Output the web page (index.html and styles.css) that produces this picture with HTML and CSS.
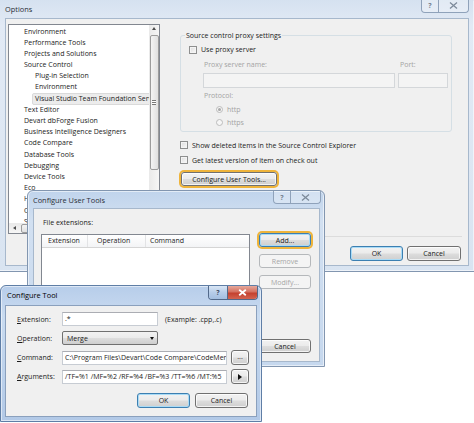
FILE: index.html
```html
<!DOCTYPE html>
<html lang="en">
<head>
  <meta charset="UTF-8">
  <title>Options</title>
  <link rel="stylesheet" href="styles.css">
</head>
<body>

  <!-- Options dialog (back) -->
  <div class="win win-options">
    <div class="titlebar">
      <span class="title">Options</span>
      <div class="caps">
        <span class="cap cap-help">?</span>
        <span class="cap cap-close"><svg width="9" height="7" viewBox="0 0 9 7"><path d="M1 0.5 L8 6.5 M8 0.5 L1 6.5" stroke="#7d8b9b" stroke-width="1.3" fill="none"/></svg></span>
      </div>
    </div>
    <div class="client options-body">
      <div class="tree">
        <ul class="tree-items">
          <li>Environment</li>
          <li>Performance Tools</li>
          <li>Projects and Solutions</li>
          <li>Source Control</li>
          <li class="sub">Plug-in Selection</li>
          <li class="sub">Environment</li>
          <li class="sub"><span class="sel">Visual Studio Team Foundation Server</span></li>
          <li>Text Editor</li>
          <li>Devart dbForge Fusion</li>
          <li>Business Intelligence Designers</li>
          <li>Code Compare</li>
          <li>Database Tools</li>
          <li>Debugging</li>
          <li>Device Tools</li>
          <li>Eco</li>
          <li>HTML Designer</li>
          <li>Office Tools</li>
          <li>SQL Server Tools</li>
        </ul>
        <div class="vscroll">
          <span class="arr arr-up"></span>
          <span class="vthumb"><span class="grip"></span></span>
        </div>
        <div class="hscroll">
          <span class="arr arr-left"></span>
          <span class="hthumb"></span>
        </div>
        <div class="corner"></div>
      </div>

      <div class="settings">
        <fieldset class="group">
          <legend>Source control proxy settings</legend>
          <div class="check in-group"><span class="box"></span>Use proxy server</div>
          <div class="proxy">
            <span class="dim">Proxy server name:</span>
            <span class="dim port-label">Port:</span>
            <span class="field off"></span>
            <span class="field off"></span>
          </div>
          <div class="dim protocol">Protocol:</div>
          <div class="radio"><span class="dot on"></span><span class="dim">http</span></div>
          <div class="radio"><span class="dot"></span><span class="dim">https</span></div>
        </fieldset>
        <div class="check first"><span class="box"></span>Show deleted items in the Source Control Explorer</div>
        <div class="check"><span class="box"></span>Get latest version of item on check out</div>
        <span class="btn focus tools-btn">Configure User Tools...</span>
      </div>

      <div class="footer">
        <span class="btn default w53">OK</span>
        <span class="btn w54">Cancel</span>
      </div>
    </div>
  </div>

  <!-- Configure User Tools dialog (middle) -->
  <div class="win win-tools">
    <div class="titlebar">
      <span class="title">Configure User Tools</span>
      <div class="caps">
        <span class="cap cap-help">?</span>
        <span class="cap cap-close"><svg width="9" height="7" viewBox="0 0 9 7"><path d="M1 0.5 L8 6.5 M8 0.5 L1 6.5" stroke="#7d8b9b" stroke-width="1.3" fill="none"/></svg></span>
      </div>
    </div>
    <div class="client tools-body">
      <div class="lbl-ext">File extensions:</div>
      <div class="list">
        <div class="list-head">
          <span class="c1">Extension</span>
          <span class="c2">Operation</span>
          <span class="c3">Command</span>
        </div>
      </div>
      <div class="side-btns">
        <span class="btn default focus">Add...</span>
        <span class="btn off">Remove</span>
        <span class="btn off">Modify...</span>
        <span class="btn push-down">Cancel</span>
      </div>
    </div>
  </div>

  <!-- Configure Tool dialog (front, active) -->
  <div class="win win-tool active">
    <div class="titlebar">
      <span class="title">Configure Tool</span>
      <div class="caps">
        <span class="cap cap-help">?</span>
        <span class="cap cap-close"><svg width="9" height="7" viewBox="0 0 9 7"><path d="M1.2 0.8 L7.8 6.2 M7.8 0.8 L1.2 6.2" stroke="#fff" stroke-width="1.8" fill="none"/></svg></span>
      </div>
    </div>
    <div class="client tool-body">
      <span class="lbl"><u>E</u>xtension:</span>
      <div class="ext-row">
        <span class="field short">.*</span>
        <span class="hint">(Example: .cpp,.c)</span>
      </div>

      <span class="lbl"><u>O</u>peration:</span>
      <div class="ext-row">
        <span class="combo">Merge<span class="combo-arrow"></span></span>
      </div>

      <span class="lbl"><u>C</u>ommand:</span>
      <span class="field">C:\Program Files\Devart\Code Compare\CodeMerge.exe</span>
      <span class="btn small">...</span>

      <span class="lbl"><u>A</u>rguments:</span>
      <span class="field">/TF=%1 /MF=%2 /RF=%4 /BF=%3 /TT=%6 /MT:%5</span>
      <span class="btn small"><span class="play"></span></span>

      <div class="tool-foot">
        <span class="btn default w53">OK</span>
        <span class="btn w53">Cancel</span>
      </div>
    </div>
  </div>

</body>
</html>
```

FILE: styles.css
```css
* {
  box-sizing: border-box;
}

body {
  margin: 0;
  width: 474px;
  height: 423px;
  overflow: hidden;
  position: relative;
  background-color: white;
  font-family: "Open Sans", "Noto Sans", sans-serif;
  font-size: 7px;
  color: #1b1b1b;
}

/* ---------- window frames ---------- */

.win {
  position: absolute;
  display: flex;
  flex-direction: column;
  border: 1px solid #8296b0;
  border-radius: 6px 6px 0 0;
  box-shadow: inset 0 0 0 1px rgba(255,255,255,0.55);
  background: linear-gradient(#d3e0ef, #e2eaf5 30px, #d9e4f1);
}

.win-options {
  left: -2px;
  top: -5px;
  width: 477px;
  height: 277px;
}

.win-tools {
  left: 27px;
  top: 190px;
  width: 298px;
  height: 177px;
  background: linear-gradient(#c0d4ec, #d2e0f1 30px, #c6d8ee);
}

.win-tool {
  left: 0;
  top: 285px;
  width: 262px;
  height: 137px;
  border-color: #5f7ea6;
  background: linear-gradient(#b7cdea, #c9dbf0 30px, #b2c9e7);
}

.titlebar {
  flex: none;
  display: flex;
  align-items: flex-start;
}

.title {
  line-height: 11px;
  font-size: 7.4px;
  color: #2a2f36;
}

.win-options .titlebar { height: 22px; }
.win-options .title { padding: 7.5px 0 0 6px; }
.win-tools .titlebar { height: 17px; }
.win-tools .title { padding: 3.5px 0 0 5px; }
.win-tool .titlebar { height: 19px; }
.win-tool .title { padding: 3.5px 0 0 6px; color: #000; }

.caps {
  margin-left: auto;
  display: flex;
  border: 1px solid #8fa2ba;
  border-top: none;
  border-radius: 0 0 4px 4px;
  overflow: hidden;
  height: 13px;
}

.win-options .caps { margin-top: 3px; margin-right: 5px; height: 14px; }
.win-tools .caps { margin-right: 3px; }
.win-tool .caps { margin-right: 3px; height: 14px; border-color: #52698a; }

.cap {
  display: flex;
  align-items: center;
  justify-content: center;
  background: rgba(255,255,255,0.3);
}

.cap-help {
  width: 17px;
  border-right: 1px solid #8fa2ba;
  color: #72808f;
  font-size: 7px;
  font-weight: bold;
}

.cap-close {
  width: 29px;
}

.win-tool .cap-help {
  width: 19px;
  border-right-color: #52698a;
  background: linear-gradient(#d9e6f5, #b7cde9 50%, #a3bee0);
  color: #3c4e66;
}

.win-tool .cap-close {
  background: linear-gradient(#e6a89c, #d4705f 45%, #c4412f 55%, #d3634f);
}

.client {
  flex: 1;
  border: 1px solid #a7b8cc;
  background-color: #f0f0f0;
}

.win-options .client { margin: 0 5px 5px 6px; }
.win-tools .client { margin: 0 4px 4px 5px; }
.win-tool .client { margin: 0 4px 4px 4px; border-color: #8aa0bd; }

/* ---------- controls ---------- */

.btn {
  display: flex;
  align-items: center;
  justify-content: center;
  height: 15px;
  border: 1px solid #707070;
  border-radius: 3px;
  background: linear-gradient(#f2f2f2, #ebebeb 48%, #dddddd 52%, #cfcfcf);
  box-shadow: inset 0 0 0 1px rgba(255,255,255,0.75);
  white-space: nowrap;
}

.btn.default {
  border-color: #3c7fb1;
  box-shadow: inset 0 0 0 1px #a9dbf6;
}

.btn.focus {
  box-shadow: inset 0 0 0 1px rgba(255,255,255,0.75), 0 0 0 2px #efb43a;
}

.btn.default.focus {
  box-shadow: inset 0 0 0 1px #a9dbf6, 0 0 0 2px #efb43a;
}

.btn.off {
  border-color: #b5b8bb;
  background: #f4f4f4;
  color: #a6a6a6;
  box-shadow: none;
}

.w53 { width: 53px; }
.w54 { width: 54px; }

.dim {
  color: #a3a3a3;
}

.field {
  display: block;
  height: 14px;
  line-height: 12px;
  padding: 0 2px;
  background-color: white;
  border: 1px solid #c7ccd3;
  border-top-color: #abadb3;
  white-space: nowrap;
  overflow: hidden;
}

.field.off {
  height: 15px;
  background-color: #f4f4f4;
  border-color: #d4d7da;
}

.check {
  display: flex;
  align-items: center;
  gap: 4px;
  line-height: 11px;
}

.box {
  width: 8px;
  height: 8px;
  border: 1px solid #8e8f8f;
  background: linear-gradient(135deg, #dcdcdc, #fbfbfb);
  box-shadow: inset 0 0 0 1px #f4f4f4;
}

/* ---------- Options ---------- */

.options-body {
  display: grid;
  grid-template-columns: 152px 1fr;
  grid-template-rows: 1fr auto;
  column-gap: 20px;
  padding: 5px 6px 4px 2px;
}

.tree {
  height: 210px;
  border: 1px solid #828790;
  background-color: white;
  display: grid;
  grid-template-columns: 1fr 10px;
  grid-template-rows: 1fr 10px;
  overflow: hidden;
}

.tree-items {
  list-style: none;
  margin: 0;
  padding: 0.5px 0 0 15px;
  overflow: hidden;
  white-space: nowrap;
}

.tree-items li {
  line-height: 11.2px;
  height: 11.2px;
}

.tree-items .sub {
  padding-left: 11px;
}

.sel {
  display: inline-block;
  margin-left: -3px;
  padding: 0 2px;
  line-height: 10px;
  background-color: #ececec;
  border: 1px solid #dadada;
  border-radius: 2px;
}

.vscroll {
  display: flex;
  flex-direction: column;
  align-items: center;
  background: linear-gradient(90deg, #e9e9e9, #f6f6f6);
}

.arr {
  width: 0;
  height: 0;
  border: 2.5px solid transparent;
}

.arr-up {
  margin-top: 2px;
  border-bottom: 3px solid #4d4d4d;
  border-top-width: 0;
}

.vthumb {
  margin-top: 5px;
  width: 9px;
  height: 135px;
  border: 1px solid #9c9c9c;
  border-radius: 2px;
  background: linear-gradient(90deg, #f4f4f4, #e0e0e0);
  display: flex;
  align-items: center;
  justify-content: center;
}

.grip {
  width: 4px;
  height: 5px;
  border-top: 1px solid #777;
  border-bottom: 1px solid #777;
  background: linear-gradient(#fff 35%, #777 35%, #777 60%, #fff 60%);
}

.hscroll {
  display: flex;
  align-items: center;
  padding-left: 4px;
  background: linear-gradient(#e9e9e9, #f6f6f6);
}

.arr-left {
  border-right: 3px solid #4d4d4d;
  border-left-width: 0;
}

.hthumb {
  margin-left: 5px;
  width: 100px;
  height: 9px;
  border: 1px solid #9c9c9c;
  border-radius: 2px;
  background: linear-gradient(#f4f4f4, #e0e0e0);
}

.corner {
  background-color: #f0f0f0;
}

.settings {
  display: flex;
  flex-direction: column;
  align-items: flex-start;
}

.group {
  align-self: stretch;
  margin: 5.5px 10px 0 0;
  padding: 0 0 3px 4px;
  border: 1px solid #d5dfe5;
  border-radius: 3px;
}

.group legend {
  padding: 0 1px;
  line-height: 11px;
}

.in-group {
  margin: 3.5px 0 0 4px;
}

.proxy {
  margin: 4px 0 0 18px;
  display: grid;
  grid-template-columns: 192px 50px;
  column-gap: 3px;
  row-gap: 2.5px;
  line-height: 11px;
}

.proxy .dim {
  padding-left: 1px;
}

.proxy .port-label {
  padding-left: 2px;
}

.protocol {
  margin: 2.5px 0 0 19px;
  line-height: 11px;
}

.radio {
  margin: 3px 0 0 31px;
  display: flex;
  align-items: center;
  gap: 4px;
  line-height: 11px;
}

.radio + .radio {
  margin-top: 2px;
}

.dot {
  width: 7px;
  height: 7px;
  border: 1px solid #bcbcbc;
  border-radius: 50%;
  background-color: #f6f6f6;
  display: flex;
  align-items: center;
  justify-content: center;
}

.dot.on::after {
  content: "";
  width: 3px;
  height: 3px;
  border-radius: 50%;
  background-color: #a8a8a8;
}

.settings .check.first {
  margin-top: 7.5px;
}

.settings .check + .check {
  margin-top: 4px;
}

.tools-btn {
  margin: 6.5px 0 0 1px;
  width: 96px;
  height: 14px;
}

.footer {
  grid-column: 2;
  display: flex;
  justify-content: flex-end;
  gap: 4px;
  border-top: 1px solid #dcdcdc;
  padding: 9px 1px 0 0;
}

/* ---------- Configure User Tools ---------- */

.tools-body {
  display: grid;
  grid-template-columns: 209px 52px;
  grid-template-rows: auto 1fr;
  column-gap: 9px;
  row-gap: 6.5px;
  padding: 7.5px 0 8px 7px;
}

.lbl-ext {
  grid-column: 1;
  padding-left: 2px;
  line-height: 11px;
}

.list {
  grid-column: 1;
  grid-row: 2;
  border: 1px solid #828790;
  background-color: white;
}

.list-head {
  display: grid;
  grid-template-columns: 46px 58px 1fr;
  height: 13px;
  line-height: 12px;
  border-bottom: 1px solid #d5d5d5;
  background: linear-gradient(#ffffff, #f3f4f6);
}

.list-head span {
  border-right: 1px solid #e2e3e5;
}

.list-head .c1 { padding-left: 6px; }
.list-head .c2 { padding-left: 9px; }
.list-head .c3 { padding-left: 4px; border-right: none; }

.side-btns {
  grid-column: 2;
  grid-row: 2;
  display: flex;
  flex-direction: column;
  gap: 7px;
  margin-top: -1px;
}

.side-btns .btn {
  height: 14px;
}

.side-btns .push-down {
  margin-top: auto;
}

/* ---------- Configure Tool ---------- */

.tool-body {
  display: grid;
  grid-template-columns: 45px 165px 22px;
  grid-auto-rows: 14px;
  row-gap: 5.3px;
  align-items: center;
  padding: 6px 0 0 11px;
}

.lbl {
  line-height: 11px;
}

.ext-row {
  grid-column: 2 / 4;
  display: flex;
  align-items: center;
}

.field.short {
  width: 96px;
}

.hint {
  margin-left: 7px;
}

.combo {
  width: 96px;
  height: 14px;
  display: flex;
  align-items: center;
  padding-left: 4px;
  border: 1px solid #707070;
  border-radius: 2px;
  background: linear-gradient(#f2f2f2, #ebebeb 48%, #dddddd 52%, #cfcfcf);
}

.combo-arrow {
  margin-left: auto;
  margin-right: 3px;
  border-left: 2.5px solid transparent;
  border-right: 2.5px solid transparent;
  border-top: 3px solid #111;
}

.btn.small {
  width: 18px;
  justify-self: end;
  line-height: 8px;
  padding-bottom: 2px;
}

.play {
  border-top: 3px solid transparent;
  border-bottom: 3px solid transparent;
  border-left: 4px solid #111;
  margin-top: 2px;
}

.tool-foot {
  grid-column: 1 / 4;
  display: flex;
  justify-content: flex-end;
  gap: 5px;
  padding-right: 1px;
  margin-top: 8px;
}
```
